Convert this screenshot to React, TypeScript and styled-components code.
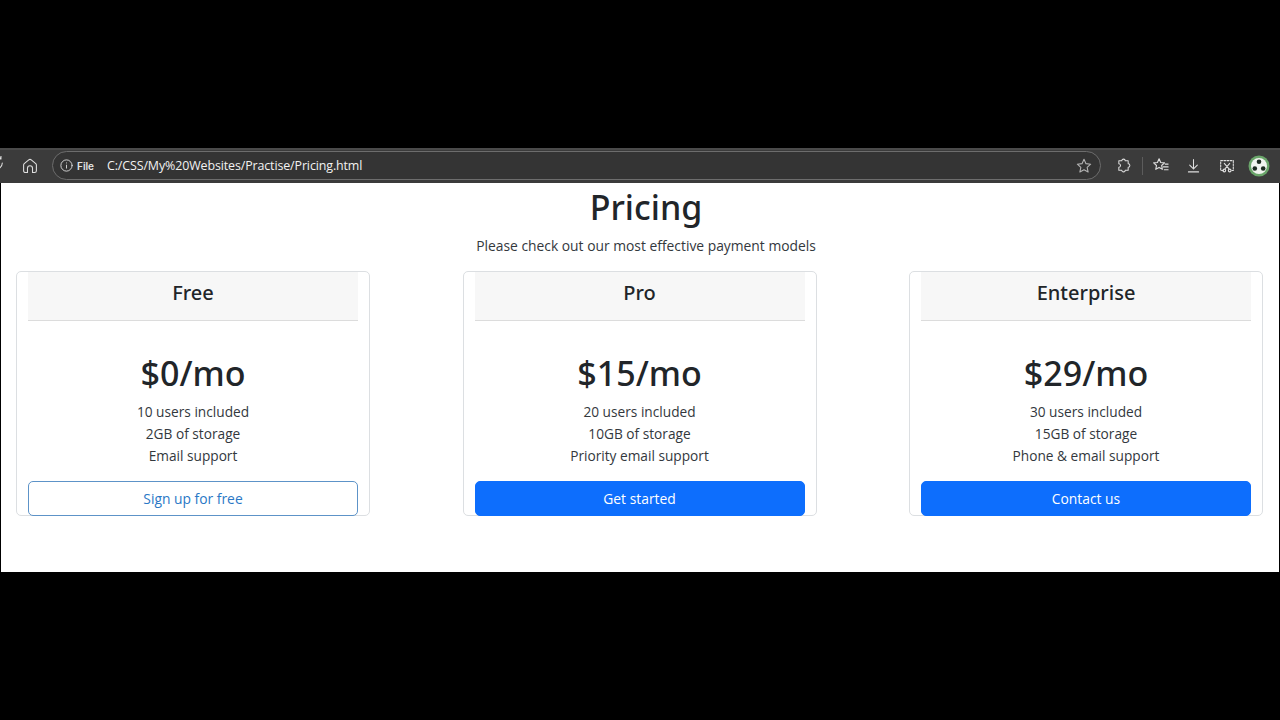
import React from 'react';
import styled, { createGlobalStyle } from 'styled-components';

const GlobalStyle = createGlobalStyle`
    html, body {
        margin: 0;
        padding: 0;
        background: #000000;
    }
    body {
        font-family: "Open Sans", "Noto Sans", "Liberation Sans", sans-serif;
    }
`;

const Page = styled.div`
    width: 1280px;
    height: 720px;
    background: #000000;
    padding-top: 148px;
    box-sizing: border-box;
    overflow: hidden;
`;

const Browser = styled.div`
    height: 424px;
    display: flex;
    flex-direction: column;
`;

const Toolbar = styled.div`
    height: 35px;
    box-sizing: border-box;
    background: #3b3b3b;
    border-top: 2px solid #4a4a4a;
    padding-bottom: 2px;
    display: flex;
    align-items: center;
    color: #dedede;
`;

const IconSlot = styled.span<{ $w?: number }>`
    width: ${(p) => p.$w ?? 24}px;
    height: 20px;
    display: flex;
    align-items: center;
    justify-content: center;
    flex-shrink: 0;
`;

const LeftEdge = styled.span`
    width: 18px;
    height: 20px;
    overflow: hidden;
    display: flex;
    align-items: center;
    justify-content: flex-end;
`;

const ReloadCrop = styled.span`
    margin-right: 13px;
`;

const HomeSlot = styled(IconSlot)`
    margin-right: 10px;
`;

const AddressBar = styled.div`
    width: 1049px;
    height: 29px;
    box-sizing: border-box;
    border: 1px solid #6d6d6d;
    border-radius: 15px;
    background: #343434;
    display: flex;
    align-items: center;
    padding: 0 5px;
    flex-shrink: 0;
`;

const StarSlot = styled(IconSlot)`
    color: #b4b4b4;
`;

const FileTag = styled.span`
    font-family: "Inter", "Liberation Sans", sans-serif;
    font-size: 10px;
    font-weight: 600;
    margin-left: 3px;
    width: 30px;
    color: #e4e4e4;
`;

const Url = styled.span`
    font-size: 12.45px;
    letter-spacing: -0.12px;
    color: #f2f2f2;
    flex: 1;
`;

const ToolIcons = styled.div`
    display: flex;
    align-items: center;
    margin-left: 10px;
`;

const Divider = styled.span`
    width: 1px;
    height: 18px;
    background: #5c5c5c;
    margin: 0 2px 0 7px;
`;

const Avatar = styled.svg`
    margin-left: 5px;
`;

const Content = styled.main`
    flex: 1;
    background: #ffffff;
    margin: 0 1px;
    padding: 0 16px 0 15px;
    display: flex;
    flex-direction: column;
`;

const Intro = styled.header`
    text-align: center;
    padding-left: 13px;
    color: #212529;
`;

const Title = styled.h1`
    margin: 0;
    font-family: "Noto Sans", "Open Sans", sans-serif;
    font-size: 34px;
    font-weight: 500;
    line-height: 48px;
`;

const Lead = styled.p`
    margin: 3px 0 0;
    font-size: 13.85px;
    line-height: 24px;
    color: #33383d;
`;

const Cards = styled.div`
    margin-top: 13px;
    display: flex;
    justify-content: space-between;
`;

const Card = styled.section`
    width: 354px;
    height: 245px;
    box-sizing: border-box;
    border: 1px solid #dcdfe2;
    border-radius: 5px;
    padding: 0 11px;
    display: flex;
    flex-direction: column;
    text-align: center;
    color: #212529;

    & > * {
        flex-shrink: 0;
    }
`;

const CardHeader = styled.div`
    height: 49px;
    box-sizing: border-box;
    background: #f7f7f7;
    border-bottom: 1px solid #dcdcdc;
    font-family: "Noto Sans", "Open Sans", sans-serif;
    font-size: 20px;
    font-weight: 500;
    line-height: 42px;
`;

const Price = styled.div`
    margin-top: 28px;
    font-family: "Noto Sans", "Open Sans", sans-serif;
    font-size: 34px;
    font-weight: 500;
    line-height: 48px;
`;

const Features = styled.ul`
    list-style: none;
    margin: 4px 0 0;
    padding: 0;
    font-size: 13.7px;
    line-height: 22px;
    color: #33383d;
`;

const Action = styled.button<{ $outline?: boolean }>`
    margin-top: 14px;
    height: 35px;
    width: 100%;
    box-sizing: border-box;
    border-radius: 5px;
    font-family: inherit;
    font-size: 13.85px;
    padding: 0;
    border: 1px solid ${(p) => (p.$outline ? '#5d93c8' : '#0d6efd')};
    background: ${(p) => (p.$outline ? '#ffffff' : '#0d6efd')};
    color: ${(p) => (p.$outline ? '#2a78c6' : '#ffffff')};
`;

const Glyph: React.FC<{ size?: number; children: React.ReactNode }> = ({ size = 18, children }) => (
    <svg width={size} height={size} viewBox="0 0 20 20" fill="none" stroke="currentColor" strokeWidth="1.2" strokeLinecap="round" strokeLinejoin="round">
        {children}
    </svg>
);

const starPath = 'M10 2.6l2.2 4.8 5.2.6-3.9 3.5 1.1 5.2L10 14.1l-4.6 2.6 1.1-5.2-3.9-3.5 5.2-.6z';

const plans = [
    { name: 'Free', price: '$0/mo', features: ['10 users included', '2GB of storage', 'Email support'], action: 'Sign up for free', outline: true },
    { name: 'Pro', price: '$15/mo', features: ['20 users included', '10GB of storage', 'Priority email support'], action: 'Get started', outline: false },
    { name: 'Enterprise', price: '$29/mo', features: ['30 users included', '15GB of storage', 'Phone & email support'], action: 'Contact us', outline: false },
];

const App: React.FC = () => (
    <Page>
        <GlobalStyle />
        <Browser>
            <Toolbar>
                <LeftEdge>
                    <ReloadCrop>
                        <Glyph>
                            <path d="M15.5 5.5A7 7 0 1 0 17 10M15.5 2v3.5H12" />
                        </Glyph>
                    </ReloadCrop>
                </LeftEdge>
                <HomeSlot>
                    <Glyph size={18}>
                        <path d="M8.6 3.2a2.2 2.2 0 0 1 2.8 0l5 4.2a2 2 0 0 1 .7 1.5v6.400a2 2 0 0 1-2 2h-2.300v-4.800a2.800 2.800 0 0 0-5.600 0v4.800H4.900a2 2 0 0 1-2-2V8.900a2 2 0 0 1 .7-1.500z" />
                    </Glyph>
                </HomeSlot>
                <AddressBar>
                    <IconSlot $w={16}>
                        <Glyph size={15}>
                            <circle cx="10" cy="10" r="7.5" />
                            <path d="M10 9.5v4M10 6.5v.2" />
                        </Glyph>
                    </IconSlot>
                    <FileTag>File</FileTag>
                    <Url>C:/CSS/My%20Websites/Practise/Pricing.html</Url>
                    <StarSlot $w={22}>
                        <Glyph size={18}>
                            <path d={starPath} />
                        </Glyph>
                    </StarSlot>
                </AddressBar>
                <ToolIcons>
                    <IconSlot $w={24}>
                        <Glyph size={17}>
                            <path d="M8 4.5a2 2 0 0 1 4 0h3.5V8a2 2 0 0 1 0 4v3.5H12a2 2 0 0 1-4 0H4.5V12a2 2 0 0 0 0-4V4.5z" />
                        </Glyph>
                    </IconSlot>
                    <Divider />
                    <IconSlot $w={30}>
                        <Glyph size={19}>
                            <path d="M8.5 3l1.7 3.8 4 .5-3 2.7.8 4-3.5-2-3.5 2 .8-4-3-2.7 4-.5zM13 11.5h5M14 14.5h4M15 8.5h3" />
                        </Glyph>
                    </IconSlot>
                    <IconSlot $w={36}>
                        <Glyph size={17}>
                            <path d="M10 3v11M5.5 9.5L10 14l4.5-4.5M4 17.500h12" />
                        </Glyph>
                    </IconSlot>
                    <IconSlot $w={32}>
                        <Glyph size={18}>
                            <path d="M6 15H3V4h14v11h-3" strokeDasharray="2 1.5" />
                            <path d="M7 7l5 6M13 7l-5 6" />
                            <circle cx="7" cy="15" r="1.5" />
                            <circle cx="13" cy="15" r="1.5" />
                        </Glyph>
                    </IconSlot>
                    <Avatar width="22" height="22" viewBox="0 0 22 22">
                        <circle cx="11" cy="11" r="10.5" fill="#6aa56a" />
                        <circle cx="11" cy="11" r="8" fill="#f1f4ef" />
                        <circle cx="11" cy="6.8" r="2.3" fill="#1c2b20" />
                        <circle cx="6.8" cy="13.5" r="2.3" fill="#1c2b20" />
                        <circle cx="15.2" cy="13.5" r="2.3" fill="#1c2b20" />
                    </Avatar>
                </ToolIcons>
            </Toolbar>
            <Content>
                <Intro>
                    <Title>Pricing</Title>
                    <Lead>Please check out our most effective payment models</Lead>
                </Intro>
                <Cards>
                    {plans.map((plan) => (
                        <Card key={plan.name}>
                            <CardHeader>{plan.name}</CardHeader>
                            <Price>{plan.price}</Price>
                            <Features>
                                {plan.features.map((f) => (
                                    <li key={f}>{f}</li>
                                ))}
                            </Features>
                            <Action $outline={plan.outline}>{plan.action}</Action>
                        </Card>
                    ))}
                </Cards>
            </Content>
        </Browser>
    </Page>
);

export default App;
